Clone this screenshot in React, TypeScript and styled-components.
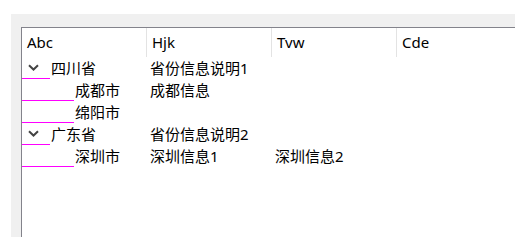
import React from 'react';
import styled, { createGlobalStyle } from 'styled-components';

// Tree view with a header, two expandable provinces and their cities

const GlobalStyle = createGlobalStyle`
  html, body {
    margin: 0;
    padding: 0;
    background: #ffffff;
  }
  body {
    font-family: "Noto Sans", "Noto Sans CJK SC", sans-serif;
  }
`;

const COLS = '125px 125px 125px 1fr';

const Panel = styled.div`
  margin: 14px 0 0 11px;
  width: 504px;
  height: 223px;
  background: #f0f0f0;
  display: flex;
  flex-direction: column;
  padding: 13px 0 0 10px;
  box-sizing: border-box;
`;

const Tree = styled.div`
  flex: 1;
  background: #ffffff;
  border-top: 1px solid #83838b;
  border-left: 1px solid #83838b;
  display: flex;
  flex-direction: column;
  font-size: 15px;
  color: #000000;
`;

const Header = styled.div`
  display: grid;
  grid-template-columns: ${COLS};
  height: 29px;
`;

const HeaderCell = styled.div<{ $last?: boolean }>`
  display: flex;
  align-items: center;
  padding-left: 5px;
  border-right: ${(p) => (p.$last ? 'none' : '1px solid #e3e3e3')};
  line-height: 1;
`;

const Row = styled.div`
  display: grid;
  grid-template-columns: ${COLS};
  height: 22px;
`;

const FirstCell = styled.div`
  display: flex;
  align-items: center;
  min-width: 0;
`;

const Branch = styled.div<{ $width: number }>`
  width: ${(p) => p.$width}px;
  height: 100%;
  flex: none;
  box-sizing: border-box;
  border-bottom: 1px solid #ff00ff;
  display: flex;
  align-items: center;
  padding-left: 6px;
`;

const Label = styled.span`
  white-space: nowrap;
  line-height: 1;
  padding-left: 1px;
`;

const Cell = styled.div`
  display: flex;
  align-items: center;
  padding-left: 3px;
  white-space: nowrap;
  line-height: 1;
`;

const Chevron = () => (
  <svg width="11" height="7" viewBox="0 0 11 7">
    <path d="M1 1.2 L5.5 5.5 L10 1.2" fill="none" stroke="#444444" strokeWidth="2" />
  </svg>
);

type Item = { name: string; cols: string[]; level: number; open?: boolean };

const items: Item[] = [
  { name: '四川省', cols: ['省份信息说明1', '', ''], level: 0, open: true },
  { name: '成都市', cols: ['成都信息', '', ''], level: 1 },
  { name: '绵阳市', cols: ['', '', ''], level: 1 },
  { name: '广东省', cols: ['省份信息说明2', '', ''], level: 0, open: true },
  { name: '深圳市', cols: ['深圳信息1', '深圳信息2', ''], level: 1 },
];

export default function App() {
  return (
    <>
      <GlobalStyle />
      <Panel>
        <Tree>
          <Header>
            <HeaderCell>Abc</HeaderCell>
            <HeaderCell>Hjk</HeaderCell>
            <HeaderCell>Tvw</HeaderCell>
            <HeaderCell $last>Cde</HeaderCell>
          </Header>
          {items.map((it) => (
            <Row key={it.name}>
              <FirstCell>
                <Branch $width={it.level === 0 ? 28 : 52}>
                  {it.open && <Chevron />}
                </Branch>
                <Label>{it.name}</Label>
              </FirstCell>
              {it.cols.map((c, i) => (
                <Cell key={i}>{c}</Cell>
              ))}
            </Row>
          ))}
        </Tree>
      </Panel>
    </>
  );
}
